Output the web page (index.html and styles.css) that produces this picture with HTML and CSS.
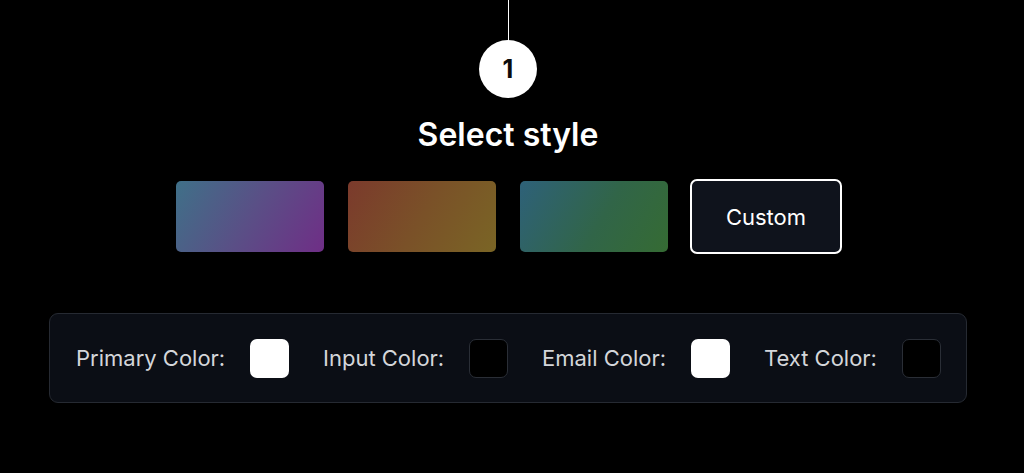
FILE: index.html
```html
<!DOCTYPE html>
<html>

<head>
  <meta charset="UTF-8">
  <meta name="viewport" content="width=device-width, initial-scale=1.0">
  <title>Select style</title>
  <link rel="stylesheet" href="styles.css">
</head>

<body>
  <div class="page">
    <div class="step">
      <div class="step-line"></div>
      <div class="step-badge">1</div>
    </div>
    <h2 class="title">Select style</h2>

    <div class="styles">
      <div class="style-item"><div class="swatch swatch-purple"></div></div>
      <div class="style-item"><div class="swatch swatch-orange"></div></div>
      <div class="style-item"><div class="swatch swatch-green"></div></div>
      <button class="style-item custom active">Custom</button>
    </div>

    <div class="colors">
      <div class="color-field">
        <span class="color-label">Primary Color:</span>
        <span class="color-box white"></span>
      </div>
      <div class="color-field">
        <span class="color-label">Input Color:</span>
        <span class="color-box black"></span>
      </div>
      <div class="color-field">
        <span class="color-label">Email Color:</span>
        <span class="color-box white"></span>
      </div>
      <div class="color-field">
        <span class="color-label">Text Color:</span>
        <span class="color-box black"></span>
      </div>
    </div>
  </div>
</body>

</html>
```

FILE: styles.css
```css
body {
  margin: 0;
  background-color: #000;
  font-family: Inter, "Noto Sans", sans-serif;
  color: #fff;
}

.page {
  width: 1016px;
  display: flex;
  flex-direction: column;
  align-items: center;
}

.step {
  display: flex;
  flex-direction: column;
  align-items: center;
}

.step-line {
  width: 1px;
  height: 40px;
  background-color: #fff;
}

.step-badge {
  width: 58px;
  height: 58px;
  border-radius: 50%;
  background-color: #fff;
  color: #0b0b0b;
  font-size: 25px;
  font-weight: 700;
  display: flex;
  align-items: center;
  justify-content: center;
}

.title {
  margin: 19px 0 0;
  font-size: 32px;
  line-height: 36px;
  font-weight: 600;
}

.styles {
  display: flex;
  gap: 20px;
  margin-top: 26px;
}

.style-item {
  width: 152px;
  height: 75px;
  box-sizing: border-box;
  padding: 2px;
  border-radius: 7px;
}

.swatch {
  width: 100%;
  height: 100%;
  border-radius: 5px;
}

.swatch-purple {
  background: linear-gradient(120deg, #3f7088 0%, #5a4f86 50%, #6f2e86 100%);
}

.swatch-orange {
  background: linear-gradient(120deg, #7b3a2c 0%, #7a5128 50%, #7a6525 100%);
}

.swatch-green {
  background: linear-gradient(120deg, #2e6179 0%, #316548 55%, #356b33 100%);
}

.custom {
  border: 2px solid #fff;
  background-color: #0f131c;
  color: #fff;
  font-family: Inter, "Noto Sans", sans-serif;
  font-size: 22px;
  font-weight: 400;
  cursor: pointer;
}

.colors {
  margin-top: 59px;
  width: 918px;
  height: 90px;
  box-sizing: border-box;
  padding: 0 25px 0 26px;
  display: flex;
  align-items: center;
  justify-content: space-between;
  background-color: #0b0e15;
  border: 1px solid #262a32;
  border-radius: 9px;
}

.color-field {
  display: flex;
  align-items: center;
  gap: 25px;
}

.color-label {
  font-size: 22px;
  color: #d4d6da;
}

.color-box {
  width: 39px;
  height: 39px;
  box-sizing: border-box;
  border-radius: 7px;
}

.color-box.white {
  background-color: #fff;
}

.color-box.black {
  background-color: #000;
  border: 1px solid #2a2e36;
}
```
